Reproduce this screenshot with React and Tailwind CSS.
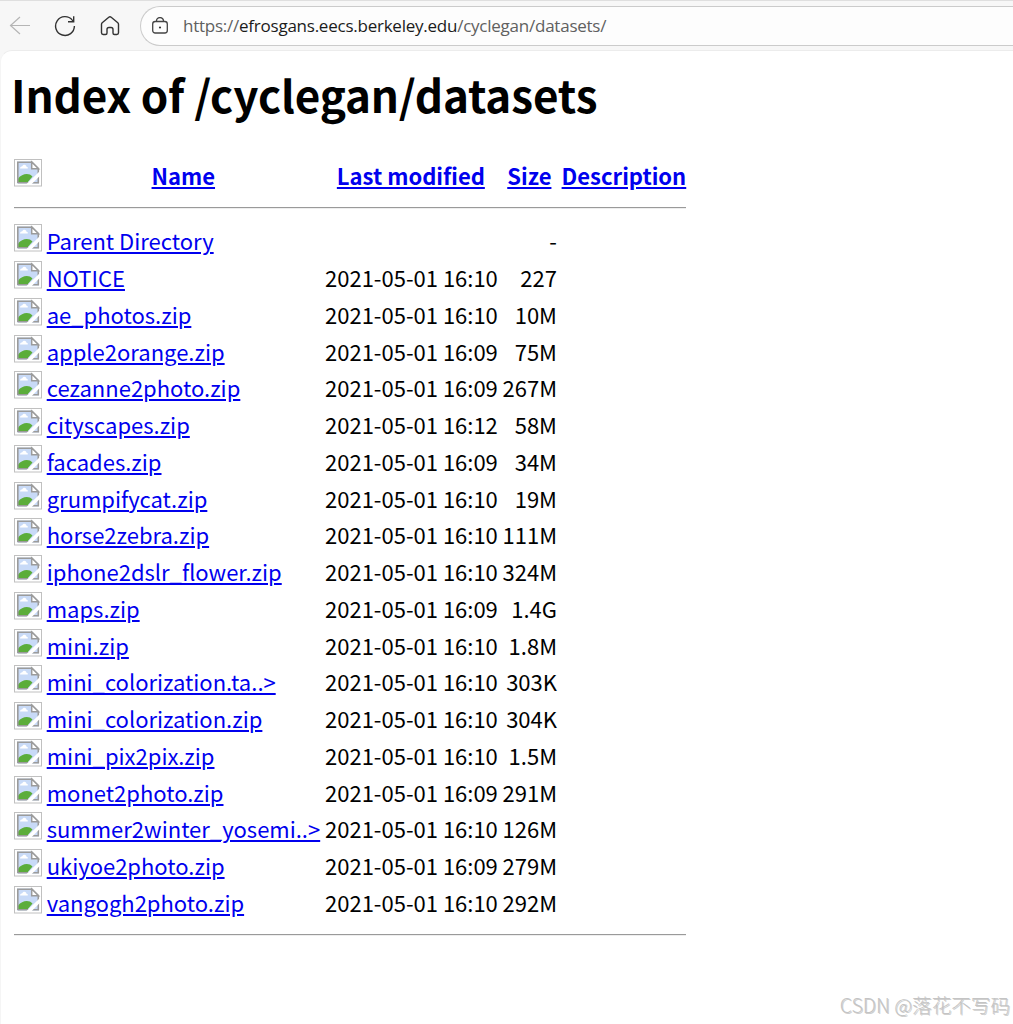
const files = [
  { name: "Parent Directory", date: "", size: "-" },
  { name: "NOTICE", date: "2021-05-01 16:10", size: "227" },
  { name: "ae_photos.zip", date: "2021-05-01 16:10", size: "10M" },
  { name: "apple2orange.zip", date: "2021-05-01 16:09", size: "75M" },
  { name: "cezanne2photo.zip", date: "2021-05-01 16:09", size: "267M" },
  { name: "cityscapes.zip", date: "2021-05-01 16:12", size: "58M" },
  { name: "facades.zip", date: "2021-05-01 16:09", size: "34M" },
  { name: "grumpifycat.zip", date: "2021-05-01 16:10", size: "19M" },
  { name: "horse2zebra.zip", date: "2021-05-01 16:10", size: "111M" },
  { name: "iphone2dslr_flower.zip", date: "2021-05-01 16:10", size: "324M" },
  { name: "maps.zip", date: "2021-05-01 16:09", size: "1.4G" },
  { name: "mini.zip", date: "2021-05-01 16:10", size: "1.8M" },
  { name: "mini_colorization.ta..>", date: "2021-05-01 16:10", size: "303K" },
  { name: "mini_colorization.zip", date: "2021-05-01 16:10", size: "304K" },
  { name: "mini_pix2pix.zip", date: "2021-05-01 16:10", size: "1.5M" },
  { name: "monet2photo.zip", date: "2021-05-01 16:09", size: "291M" },
  { name: "summer2winter_yosemi..>", date: "2021-05-01 16:10", size: "126M" },
  { name: "ukiyoe2photo.zip", date: "2021-05-01 16:09", size: "279M" },
  { name: "vangogh2photo.zip", date: "2021-05-01 16:10", size: "292M" },
];

function BrokenImage() {
  return (
    <svg className="block w-7 h-7" viewBox="0 0 28 28" fill="none">
      <rect x="0.5" y="0.5" width="27" height="26.5" fill="#fff" stroke="#c0c0c0" />
      <path d="M3 2.500H18L25 9.500V24.500H3Z" fill="#c8daf7" />
      <path d="M6 9.500C6 8 7.500 7.500 8.300 7.300C9.500 5 12 5.500 12.500 7.700C14 7.700 14.300 9.500 13.500 9.500Z" fill="#fff" />
      <path d="M4 24V19.500C8 14.500 15 13.500 18.500 17.500L13 24Z" fill="#5bad3a" />
      <path d="M3.800 24V3.300H18L24.300 9.500V23.700H3.800" stroke="#9b9b9b" strokeWidth="1.600" />
      <path d="M17.700 3V9.700H24.500Z" fill="#fff" stroke="#9b9b9b" strokeWidth="1.500" />
      <path d="M12.300 25.200L26 12V16.800L17.500 25.200Z" fill="#fff" />
    </svg>
  );
}

function Toolbar() {
  return (
    <div className="flex h-[50px] items-center border-t border-[#dfdfdf] bg-[#f7f7f7]">
      <svg className="ml-[9px] size-[22px] shrink-0" viewBox="0 0 22 22" fill="none" stroke="#b5b5b5" strokeWidth="1.2">
        <path d="M21 10.500H1.500M11 2L1.500 10.500L11 19" />
      </svg>
      <svg className="ml-[23px] size-[22px] shrink-0" viewBox="0 0 22 22" fill="none" stroke="#333" strokeWidth="1.4">
        <path d="M20.400 11A9.400 9.400 0 1 1 18.300 5.100L19.700 6.700M19.700 1.300V6.700H14" />
      </svg>
      <svg className="ml-[23px] size-[22px] shrink-0" viewBox="0 0 22 22" fill="none" stroke="#333" strokeWidth="1.4" strokeLinejoin="round">
        <path d="M2.500 9.300Q2.500 8.500 3.200 7.800L9.800 2.200Q11 1.200 12.200 2.200L18.800 7.800Q19.500 8.500 19.500 9.300V17.800Q19.500 19.500 17.800 19.500H15.500Q14 19.500 14 18V14.500Q14 12.500 12 12.500H10Q8 12.500 8 14.500V18Q8 19.500 6.500 19.500H4.200Q2.500 19.500 2.500 17.800Z" />
      </svg>
      <div className="ml-[19px] flex h-10 flex-1 items-center rounded-l-full border border-r-0 border-[#cbcbcb] bg-[#fdfdfd]">
        <svg className="ml-[10px] size-[18px] shrink-0" viewBox="0 0 18 18" fill="none" stroke="#444" strokeWidth="1.300">
          <rect x="1.700" y="4.500" width="14.600" height="11.500" rx="2.500" />
          <path d="M5.500 4.500V4A3.500 3.500 0 0 1 12.500 4V4.500" />
          <circle cx="9" cy="10.500" r="1.100" fill="#333" stroke="none" />
        </svg>
        <span className="ml-[14px] whitespace-nowrap font-['Open_Sans','Noto_Sans',sans-serif] text-[17px] tracking-[-0.24px] text-[#606060]">
          https://<span className="text-[#1b1b1b]">efrosgans.eecs.berkeley.edu</span>/cyclegan/datasets/
        </span>
      </div>
    </div>
  );
}

function Link({ children }) {
  return (
    <a href="#" className="text-[#0000ee] underline">
      {children}
    </a>
  );
}

export default function App() {
  return (
    <div className="flex h-[1024px] w-[1013px] flex-col overflow-hidden bg-[#f7f7f7] font-['Noto_Sans_CJK_SC',sans-serif] text-black">
      <Toolbar />
      <main className="relative flex-1 rounded-tl-xl border-t border-l border-t-[#ececec] border-l-[#f5f5f5] bg-white pl-[13px]">
        <h1 className="-ml-[3px] mt-[9px] h-[68px] whitespace-nowrap text-[44px] leading-[68px] font-bold tracking-[-0.13px]">
          Index of /cyclegan/datasets
        </h1>
        <div className="mt-[31px] w-[672px] text-[22px]">
          <div className="grid h-[48px] grid-cols-[28px_272.6px_172.5px_54.5px_123px] gap-x-[5px] text-center leading-[33px] font-bold whitespace-nowrap">
            <BrokenImage />
            <Link>Name</Link>
            <Link>Last modified</Link>
            <Link>Size</Link>
            <Link>Description</Link>
          </div>
          <hr className="mb-[15.3px] h-[2px] border-t border-b border-t-[#9a9a9a] border-b-[#eeeeee]" />
          {files.map((file) => (
            <div
              key={file.name}
              className="grid h-[36.75px] grid-cols-[28px_273px_172.5px_54.5px_123px] gap-x-[5px] leading-[33px] whitespace-nowrap"
            >
              <BrokenImage />
              <span className="-ml-[0.3px]">
                <Link>{file.name}</Link>
              </span>
              <span className="text-right">{file.date}</span>
              <span className="text-right">{file.size}</span>
            </div>
          ))}
          <hr className="mt-[11px] h-[2px] border-t border-b border-t-[#9a9a9a] border-b-[#eeeeee]" />
        </div>
        <span className="absolute right-[3px] bottom-[5px] text-[19.6px] leading-7 font-light whitespace-nowrap text-[#c4c4c4] [text-shadow:1px_1px_0_#cfcfcf]">
          CSDN @落花不写码
        </span>
      </main>
    </div>
  );
}
